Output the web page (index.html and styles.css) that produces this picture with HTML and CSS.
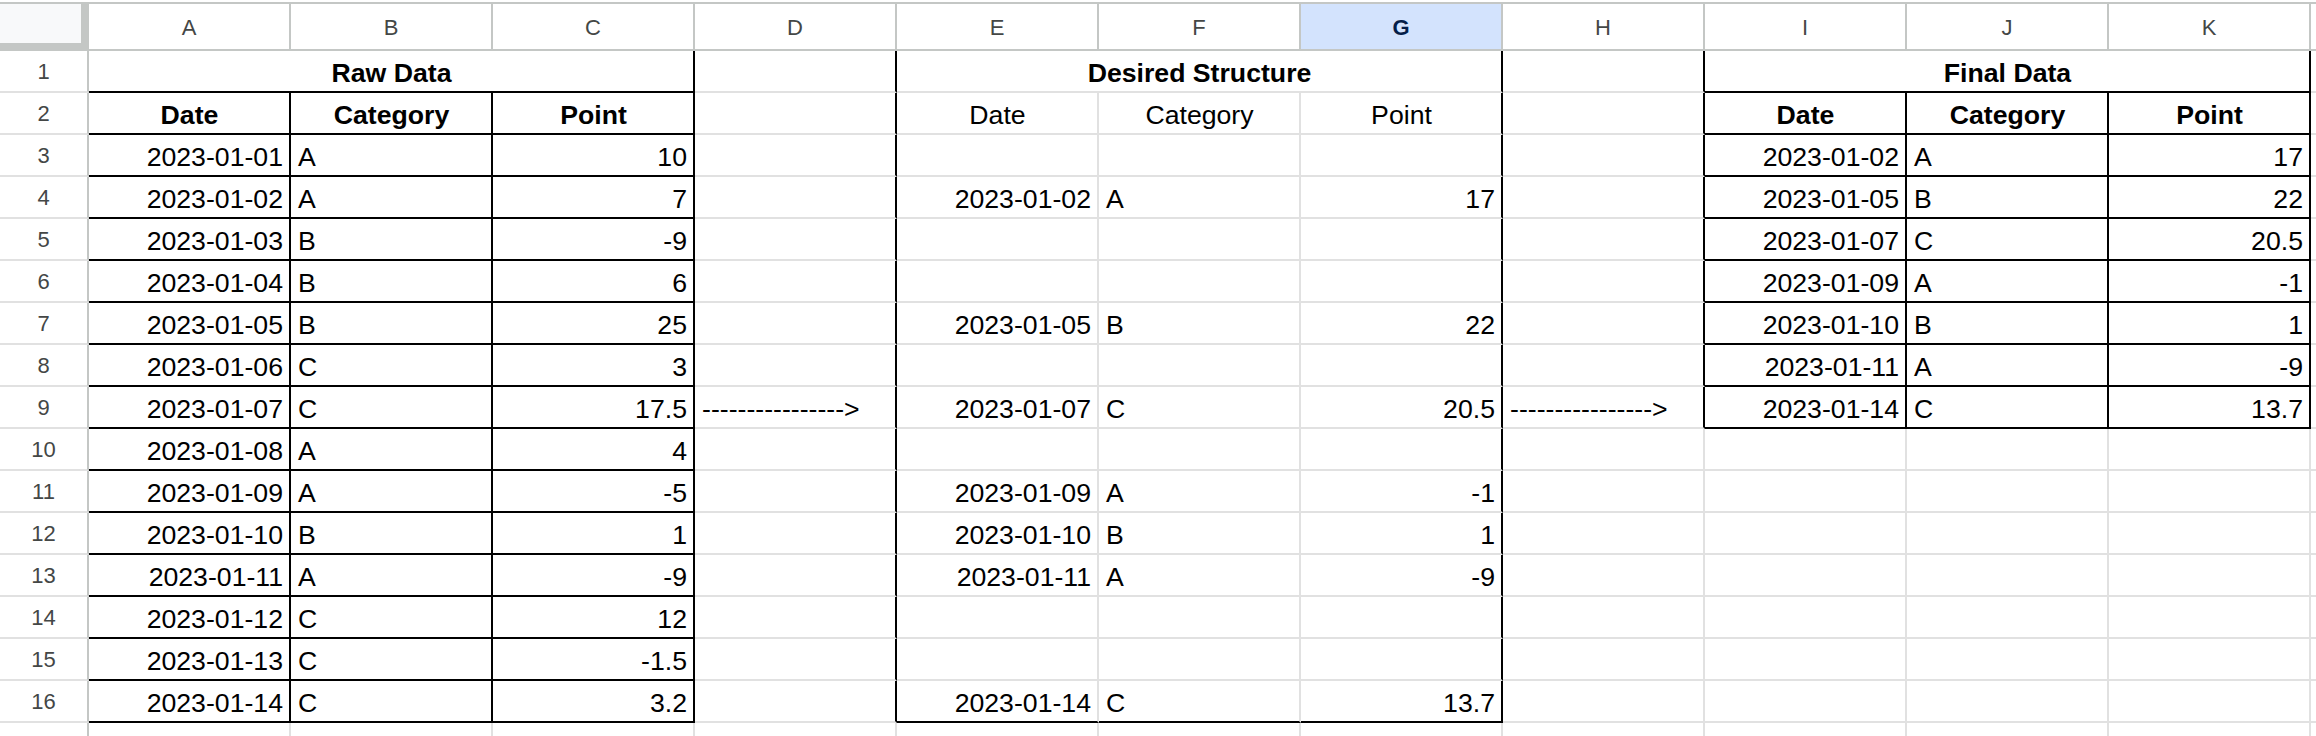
FILE: index.html
```html
<!DOCTYPE html>
<html>
<head>
<meta charset="utf-8">
<link rel="stylesheet" href="styles.css">
</head>
<body>
<div class="sheet">
  <div class="row hdr">
    <div class="corner"></div>
    <div class="ch">A</div><div class="ch">B</div><div class="ch">C</div><div class="ch">D</div>
    <div class="ch">E</div><div class="ch">F</div><div class="ch sel">G</div><div class="ch">H</div>
    <div class="ch">I</div><div class="ch">J</div><div class="ch">K</div><div class="ch"></div>
  </div>

  <div class="row">
    <div class="rh">1</div>
    <div class="c w3 ctr b br bb">Raw Data</div>
    <div class="c br"></div>
    <div class="c w3 ctr b br">Desired Structure</div>
    <div class="c br"></div>
    <div class="c w3 ctr b br bb">Final Data</div>
    <div class="c"></div>
  </div>

  <div class="row">
    <div class="rh">2</div>
    <div class="c ctr b br bb">Date</div><div class="c ctr b br bb">Category</div><div class="c ctr b br bb">Point</div>
    <div class="c br"></div>
    <div class="c ctr">Date</div><div class="c ctr">Category</div><div class="c ctr br">Point</div>
    <div class="c br"></div>
    <div class="c ctr b br bb">Date</div><div class="c ctr b br bb">Category</div><div class="c ctr b br bb">Point</div>
    <div class="c"></div>
  </div>

  <div class="row">
    <div class="rh">3</div>
    <div class="c r br bb">2023-01-01</div><div class="c br bb">A</div><div class="c r br bb">10</div>
    <div class="c br"></div>
    <div class="c"></div><div class="c"></div><div class="c br"></div>
    <div class="c br"></div>
    <div class="c r br bb">2023-01-02</div><div class="c br bb">A</div><div class="c r br bb">17</div>
    <div class="c"></div>
  </div>

  <div class="row">
    <div class="rh">4</div>
    <div class="c r br bb">2023-01-02</div><div class="c br bb">A</div><div class="c r br bb">7</div>
    <div class="c br"></div>
    <div class="c r">2023-01-02</div><div class="c">A</div><div class="c r br">17</div>
    <div class="c br"></div>
    <div class="c r br bb">2023-01-05</div><div class="c br bb">B</div><div class="c r br bb">22</div>
    <div class="c"></div>
  </div>

  <div class="row">
    <div class="rh">5</div>
    <div class="c r br bb">2023-01-03</div><div class="c br bb">B</div><div class="c r br bb">-9</div>
    <div class="c br"></div>
    <div class="c"></div><div class="c"></div><div class="c br"></div>
    <div class="c br"></div>
    <div class="c r br bb">2023-01-07</div><div class="c br bb">C</div><div class="c r br bb">20.5</div>
    <div class="c"></div>
  </div>

  <div class="row">
    <div class="rh">6</div>
    <div class="c r br bb">2023-01-04</div><div class="c br bb">B</div><div class="c r br bb">6</div>
    <div class="c br"></div>
    <div class="c"></div><div class="c"></div><div class="c br"></div>
    <div class="c br"></div>
    <div class="c r br bb">2023-01-09</div><div class="c br bb">A</div><div class="c r br bb">-1</div>
    <div class="c"></div>
  </div>

  <div class="row">
    <div class="rh">7</div>
    <div class="c r br bb">2023-01-05</div><div class="c br bb">B</div><div class="c r br bb">25</div>
    <div class="c br"></div>
    <div class="c r">2023-01-05</div><div class="c">B</div><div class="c r br">22</div>
    <div class="c br"></div>
    <div class="c r br bb">2023-01-10</div><div class="c br bb">B</div><div class="c r br bb">1</div>
    <div class="c"></div>
  </div>

  <div class="row">
    <div class="rh">8</div>
    <div class="c r br bb">2023-01-06</div><div class="c br bb">C</div><div class="c r br bb">3</div>
    <div class="c br"></div>
    <div class="c"></div><div class="c"></div><div class="c br"></div>
    <div class="c br"></div>
    <div class="c r br bb">2023-01-11</div><div class="c br bb">A</div><div class="c r br bb">-9</div>
    <div class="c"></div>
  </div>

  <div class="row">
    <div class="rh">9</div>
    <div class="c r br bb">2023-01-07</div><div class="c br bb">C</div><div class="c r br bb">17.5</div>
    <div class="c br">----------------&gt;</div>
    <div class="c r">2023-01-07</div><div class="c">C</div><div class="c r br">20.5</div>
    <div class="c br">----------------&gt;</div>
    <div class="c r br bb">2023-01-14</div><div class="c br bb">C</div><div class="c r br bb">13.7</div>
    <div class="c"></div>
  </div>

  <div class="row">
    <div class="rh">10</div>
    <div class="c r br bb">2023-01-08</div><div class="c br bb">A</div><div class="c r br bb">4</div>
    <div class="c br"></div>
    <div class="c"></div><div class="c"></div><div class="c br"></div>
    <div class="c"></div><div class="c"></div><div class="c"></div><div class="c"></div><div class="c"></div>
  </div>

  <div class="row">
    <div class="rh">11</div>
    <div class="c r br bb">2023-01-09</div><div class="c br bb">A</div><div class="c r br bb">-5</div>
    <div class="c br"></div>
    <div class="c r">2023-01-09</div><div class="c">A</div><div class="c r br">-1</div>
    <div class="c"></div><div class="c"></div><div class="c"></div><div class="c"></div><div class="c"></div>
  </div>

  <div class="row">
    <div class="rh">12</div>
    <div class="c r br bb">2023-01-10</div><div class="c br bb">B</div><div class="c r br bb">1</div>
    <div class="c br"></div>
    <div class="c r">2023-01-10</div><div class="c">B</div><div class="c r br">1</div>
    <div class="c"></div><div class="c"></div><div class="c"></div><div class="c"></div><div class="c"></div>
  </div>

  <div class="row">
    <div class="rh">13</div>
    <div class="c r br bb">2023-01-11</div><div class="c br bb">A</div><div class="c r br bb">-9</div>
    <div class="c br"></div>
    <div class="c r">2023-01-11</div><div class="c">A</div><div class="c r br">-9</div>
    <div class="c"></div><div class="c"></div><div class="c"></div><div class="c"></div><div class="c"></div>
  </div>

  <div class="row">
    <div class="rh">14</div>
    <div class="c r br bb">2023-01-12</div><div class="c br bb">C</div><div class="c r br bb">12</div>
    <div class="c br"></div>
    <div class="c"></div><div class="c"></div><div class="c br"></div>
    <div class="c"></div><div class="c"></div><div class="c"></div><div class="c"></div><div class="c"></div>
  </div>

  <div class="row">
    <div class="rh">15</div>
    <div class="c r br bb">2023-01-13</div><div class="c br bb">C</div><div class="c r br bb">-1.5</div>
    <div class="c br"></div>
    <div class="c"></div><div class="c"></div><div class="c br"></div>
    <div class="c"></div><div class="c"></div><div class="c"></div><div class="c"></div><div class="c"></div>
  </div>

  <div class="row">
    <div class="rh">16</div>
    <div class="c r br bb">2023-01-14</div><div class="c br bb">C</div><div class="c r br bb">3.2</div>
    <div class="c br"></div>
    <div class="c r bb">2023-01-14</div><div class="c bb">C</div><div class="c r br bb">13.7</div>
    <div class="c"></div><div class="c"></div><div class="c"></div><div class="c"></div><div class="c"></div>
  </div>

  <div class="row">
    <div class="rh">17</div>
    <div class="c"></div><div class="c"></div><div class="c"></div><div class="c"></div>
    <div class="c"></div><div class="c"></div><div class="c"></div><div class="c"></div>
    <div class="c"></div><div class="c"></div><div class="c"></div><div class="c"></div>
  </div>
</div>
</body>
</html>
```

FILE: styles.css
```css
html, body {
  margin: 0;
  padding: 0;
  background: #ffffff;
  overflow: hidden;
}

.sheet {
  padding-top: 2px;
  width: 2600px;
  font-family: "Liberation Sans", Arial, sans-serif;
  color: #000;
}

.row {
  display: flex;
  height: 42px;
}

.row.hdr {
  height: 49px;
}

.corner {
  flex: none;
  width: 89px;
  height: 49px;
  box-sizing: border-box;
  background: #f8f9fa;
  border-top: 2px solid #c4c7c5;
  border-right: 8px solid #c4c7c5;
  border-bottom: 8px solid #c4c7c5;
}

.ch {
  flex: none;
  width: 202px;
  height: 49px;
  box-sizing: border-box;
  padding-top: 2px;
  border-top: 2px solid #c4c7c5;
  border-right: 2px solid #c4c7c5;
  border-bottom: 2px solid #c4c7c5;
  display: flex;
  align-items: center;
  justify-content: center;
  font-family: "Liberation Sans", Arial, sans-serif;
  font-size: 22px;
  color: #444746;
}

.ch.sel {
  background: #d3e3fd;
  color: #041e49;
  font-weight: bold;
}

.rh {
  flex: none;
  width: 89px;
  height: 42px;
  box-sizing: border-box;
  padding-top: 1px;
  border-right: 2px solid #c4c7c5;
  border-bottom: 2px solid #e1e1e1;
  display: flex;
  align-items: center;
  justify-content: center;
  font-size: 22px;
  color: #444746;
}

.c {
  flex: none;
  width: 202px;
  height: 42px;
  box-sizing: border-box;
  border-right: 2px solid #e1e1e1;
  border-bottom: 2px solid #e1e1e1;
  padding: 0 6px 2px 7px;
  display: flex;
  align-items: flex-end;
  justify-content: flex-start;
  font-size: 26.67px;
  white-space: nowrap;
}

.c.w3 { width: 606px; }
.c.r { justify-content: flex-end; }
.c.ctr { justify-content: center; }
.c.b { font-weight: bold; }
.c.br { border-right-color: #000; }
.c.bb { border-bottom-color: #000; }
```
